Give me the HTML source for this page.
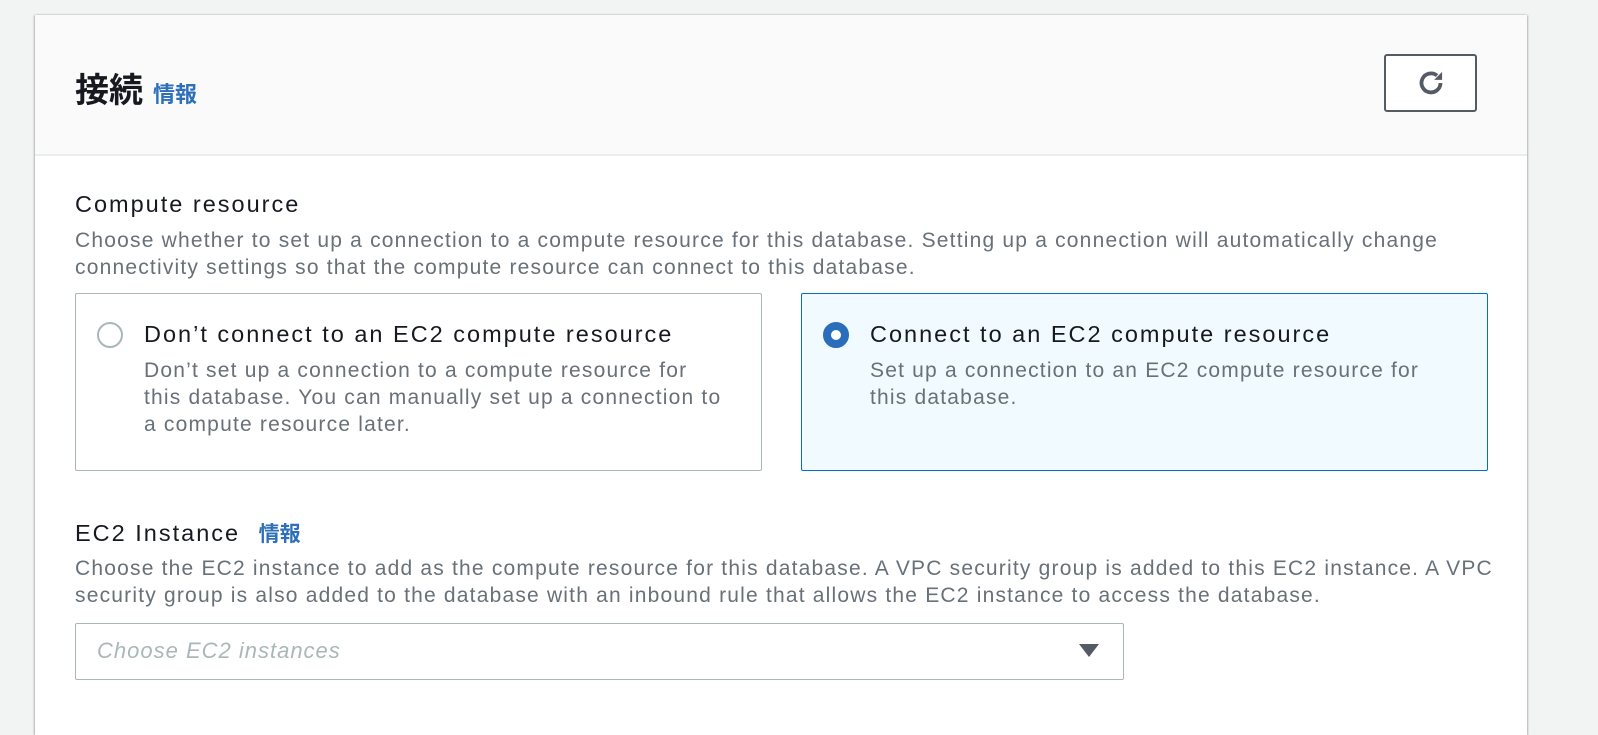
<!DOCTYPE html>
<html><head><meta charset="utf-8"><style>
body{margin:0;background:#f2f3f3;font-family:"Liberation Sans","Noto Sans CJK JP",sans-serif;width:1598px;height:716px;overflow:hidden;position:relative}
.panel{position:absolute;left:35px;top:15px;width:1492px;height:720px;background:#fff;box-shadow:0 1px 2px rgba(0,22,40,.3),1px 0 2px rgba(0,22,40,.15),-1px 0 2px rgba(0,22,40,.15)}
.hdr{height:139px;background:#fafafa;border-bottom:2px solid #eaeded;position:relative}
.h1{position:absolute;left:40px;top:48px;font-size:34px;font-weight:bold;color:#16191f}
.info{font-size:22px;font-weight:bold;margin-left:10px;color:#2d6fb9}
.btn{position:absolute;left:1349px;top:39px;width:93px;height:58px;border:2px solid #545b64;border-radius:3px;box-sizing:border-box;background:#fff}
.t{position:absolute;color:#16191f;font-size:23.5px;letter-spacing:2px;white-space:nowrap}
.d{position:absolute;color:#687078;font-size:21px;letter-spacing:1.2px;line-height:27px}
.card{position:absolute;top:278px;height:178px;box-sizing:border-box;border:1.5px solid #aab7b8;border-radius:2px}
.card.sel{border-color:#0073bb;background:#f1faff}
.radio{position:absolute;left:21px;top:28px;width:26px;height:26px;border-radius:50%;border:2px solid #aab7b8;box-sizing:border-box;background:#fff}
.radio.on{border:8px solid #2a6ebb}
.sel-box{position:absolute;left:40px;top:608px;width:1049px;height:57px;border:1.5px solid #aab7b8;border-radius:2px;box-sizing:border-box}
</style></head><body>
<div class="panel">
 <div class="hdr">
  <div class="h1">接続<span class="info">情報</span></div>
  <div class="btn"><svg width="38" height="38" viewBox="0 0 24 24" style="position:absolute;left:26px;top:8px"><path d="M18 12a6 6 0 1 1-2.2-4.7" fill="none" stroke="#545b64" stroke-width="2.4"/><path d="M19 5v5h-5z" fill="#545b64"/></svg></div>
 </div>
 <div class="t" style="left:40px;top:176px">Compute resource</div>
 <div class="d" style="left:40px;top:212px;width:1405px">Choose whether to set up a connection to a compute resource for this database. Setting up a connection will automatically change connectivity settings so that the compute resource can connect to this database.</div>
 <div class="card" style="left:40px;width:687px">
  <div class="radio"></div>
  <div class="t" style="left:68px;top:27px">Don’t connect to an EC2 compute resource</div>
  <div class="d" style="left:68px;top:63px;width:586px">Don’t set up a connection to a compute resource for<br>this database. You can manually set up a connection to<br>a compute resource later.</div>
 </div>
 <div class="card sel" style="left:766px;width:687px">
  <div class="radio on"></div>
  <div class="t" style="left:68px;top:27px">Connect to an EC2 compute resource</div>
  <div class="d" style="left:68px;top:63px;width:580px">Set up a connection to an EC2 compute resource for this database.</div>
 </div>
 <div class="t" style="left:40px;top:503px">EC2 Instance <span class="info" style="font-size:21px;margin-left:10px;letter-spacing:0">情報</span></div>
 <div class="d" style="left:40px;top:540px;width:1485px">Choose the EC2 instance to add as the compute resource for this database. A VPC security group is added to this EC2 instance. A VPC security group is also added to the database with an inbound rule that allows the EC2 instance to access the database.</div>
 <div class="sel-box">
  <div style="position:absolute;left:21px;top:14px;font-size:22px;letter-spacing:1px;font-style:italic;color:#aab7b8">Choose EC2 instances</div>
  <svg width="20" height="14" style="position:absolute;left:1003px;top:20px"><path d="M0 0h20L10 13z" fill="#545b64"/></svg>
 </div>
</div>
</body></html>
